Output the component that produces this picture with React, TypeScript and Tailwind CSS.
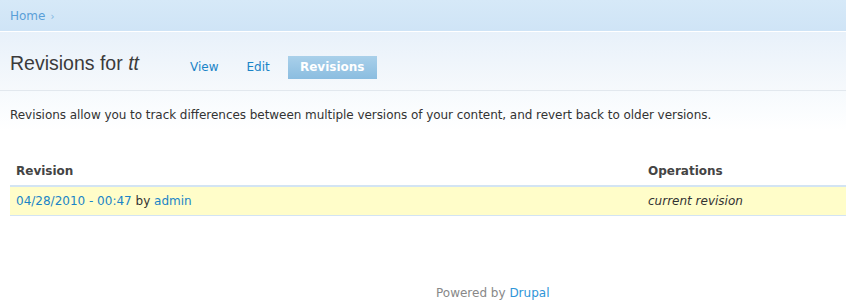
export default function App() {
  const font = { fontFamily: '"DejaVu Sans", Verdana, sans-serif' };
  return (
    <div className="min-h-[300px] w-[846px] overflow-hidden bg-white text-[12px] text-[#333]" style={font}>
      {/* breadcrumb bar */}
      <div className="flex h-[31px] items-center bg-gradient-to-b from-[#d6e9f8] to-[#cfe4f6] px-[10px] pt-px">
        <a className="text-[#5a9fd8]">Home</a>
        <span className="ml-[5px] text-[10px] text-[#7fb3df]">›</span>
      </div>
      <div className="h-px bg-white" />
      {/* title + tabs */}
      <div className="flex h-[59px] items-end border-b border-[#e2e8ee] bg-gradient-to-b from-[#e8f1fa] to-[#f6f9fc] pl-[10px] pb-[10px]">
        <h1
          className="mb-[2px] text-[19.5px] font-normal text-[#3b3b3b]"
          style={{ fontFamily: '"Liberation Sans", Arial, sans-serif' }}
        >
          Revisions for <em>tt</em>
        </h1>
        <div className="ml-[44px] flex items-center">
          <a className="px-[7px] py-[4px] text-[#1a84c7]">View</a>
          <a className="ml-[14px] px-[7px] py-[4px] text-[#1a84c7]">Edit</a>
          <a className="ml-[11px] flex h-[23px] w-[89px] items-center justify-center bg-gradient-to-b from-[#a9d0ea] to-[#8bbde0] font-bold text-white">
            Revisions
          </a>
        </div>
      </div>
      {/* content */}
      <div className="bg-gradient-to-b from-[#f6fafd] to-white to-[40px] pl-[10px] pt-[15px]">
        <p className="leading-[18px] tracking-[-0.05px]">
          Revisions allow you to track differences between multiple versions of your content, and revert back to older versions.
        </p>
        <table className="mt-[38px] w-full border-collapse">
          <thead>
            <tr className="border-b-2 border-[#d3e4f3]">
              <th className="px-[6px] pb-[5px] text-left font-bold text-[#444]">Revision</th>
              <th className="w-[204px] px-[6px] pb-[5px] text-left font-bold text-[#444]">Operations</th>
            </tr>
          </thead>
          <tbody>
            <tr className="h-[29px] border-b border-[#d3e4f3] bg-[#fffdc9]">
              <td className="px-[6px]">
                <a className="text-[#1a84c7]">04/28/2010 - 00:47</a> by{" "}
                <a className="text-[#1a84c7]">admin</a>
              </td>
              <td className="px-[6px] italic">current revision</td>
            </tr>
          </tbody>
        </table>
        <div className="mt-[68px] pl-[426px] text-[#888]">
          Powered by <a className="text-[#2e95d8]">Drupal</a>
        </div>
      </div>
    </div>
  );
}
